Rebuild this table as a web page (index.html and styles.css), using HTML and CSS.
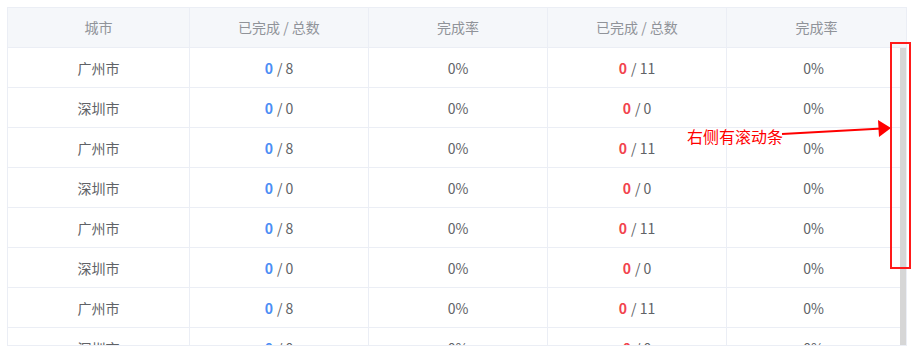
FILE: index.html
```html
<!DOCTYPE html>
<html lang="zh-CN">
<head>
<meta charset="utf-8">
<link rel="stylesheet" href="styles.css">
<title>table</title>
</head>
<body>
<div class="table">
  <div class="head">
    <div class="hc">城市</div>
    <div class="hc">已完成 / 总数</div>
    <div class="hc">完成率</div>
    <div class="hc">已完成 / 总数</div>
    <div class="hc last">完成率</div>
  </div>
  <div class="bodywrap">
    <div class="rows">
      <div class="row"><div class="c">广州市</div><div class="c"><b class="blue">0</b> / 8</div><div class="c">0%</div><div class="c"><b class="red">0</b> / 11</div><div class="c last">0%</div></div>
      <div class="row"><div class="c">深圳市</div><div class="c"><b class="blue">0</b> / 0</div><div class="c">0%</div><div class="c"><b class="red">0</b> / 0</div><div class="c last">0%</div></div>
      <div class="row"><div class="c">广州市</div><div class="c"><b class="blue">0</b> / 8</div><div class="c">0%</div><div class="c"><b class="red">0</b> / 11</div><div class="c last">0%</div></div>
      <div class="row"><div class="c">深圳市</div><div class="c"><b class="blue">0</b> / 0</div><div class="c">0%</div><div class="c"><b class="red">0</b> / 0</div><div class="c last">0%</div></div>
      <div class="row"><div class="c">广州市</div><div class="c"><b class="blue">0</b> / 8</div><div class="c">0%</div><div class="c"><b class="red">0</b> / 11</div><div class="c last">0%</div></div>
      <div class="row"><div class="c">深圳市</div><div class="c"><b class="blue">0</b> / 0</div><div class="c">0%</div><div class="c"><b class="red">0</b> / 0</div><div class="c last">0%</div></div>
      <div class="row"><div class="c">广州市</div><div class="c"><b class="blue">0</b> / 8</div><div class="c">0%</div><div class="c"><b class="red">0</b> / 11</div><div class="c last">0%</div></div>
      <div class="row"><div class="c">深圳市</div><div class="c"><b class="blue">0</b> / 0</div><div class="c">0%</div><div class="c"><b class="red">0</b> / 0</div><div class="c last">0%</div></div>
    </div>
    <div class="scrollbar"></div>
  </div>
</div>
<div class="note">右侧有滚动条</div>
<svg class="arrow" width="916" height="353" viewBox="0 0 916 353">
  <line x1="782" y1="134" x2="882" y2="128.5" stroke="#ff0000" stroke-width="2"/>
  <polygon points="891,128 878,120 879,137" fill="#ff0000"/>
</svg>
<div class="mark"></div>
</body>
</html>
```

FILE: styles.css
```css
html, body {
  margin: 0;
  padding: 0;
  background: #ffffff;
}
body {
  padding: 7px 0 0 7px;
  font-family: "Noto Sans CJK SC", "Noto Sans", sans-serif;
  font-size: 14px;
  color: #606266;
  position: relative;
  width: 916px;
  height: 353px;
  box-sizing: border-box;
  overflow: hidden;
}
.table {
  width: 900px;
  height: 339px;
  box-sizing: border-box;
  border: 1px solid #ebeef5;
  display: flex;
  flex-direction: column;
}
.head {
  display: grid;
  grid-template-columns: 182px 179px 179px 179px 179px;
  height: 40px;
  background: #f5f7fa;
  border-bottom: 1px solid #ebeef5;
  box-sizing: border-box;
  flex: none;
}
.hc {
  display: flex;
  align-items: center;
  justify-content: center;
  color: #909399;
  border-right: 1px solid #ebeef5;
  padding-bottom: 1px;
}
.hc.last { border-right: none; }
.bodywrap {
  flex: 1;
  display: flex;
  min-height: 0;
  overflow: hidden;
}
.rows {
  width: 892px;
  flex: none;
}
.row {
  display: grid;
  grid-template-columns: 182px 179px 179px 179px 173px;
  height: 40px;
  box-sizing: border-box;
  border-bottom: 1px solid #ebeef5;
}
.c {
  display: flex;
  align-items: center;
  justify-content: center;
  border-right: 1px solid #ebeef5;
}
.c.last { border-right: none; }
.blue { color: #4d8ef5; font-weight: bold; margin-right: 4px; }
.red { color: #f2434e; font-weight: bold; margin-right: 4px; }
.scrollbar {
  width: 6px;
  background: #d6d6d6;
  flex: none;
}
.note {
  position: absolute;
  left: 687px;
  top: 126px;
  font-size: 16px;
  line-height: 20px;
  color: #ff0000;
}
.arrow {
  position: absolute;
  left: 0;
  top: 0;
}
.mark {
  position: absolute;
  left: 890px;
  top: 42px;
  width: 21px;
  height: 227px;
  box-sizing: border-box;
  border: 2px solid #ff1a1a;
}
```
